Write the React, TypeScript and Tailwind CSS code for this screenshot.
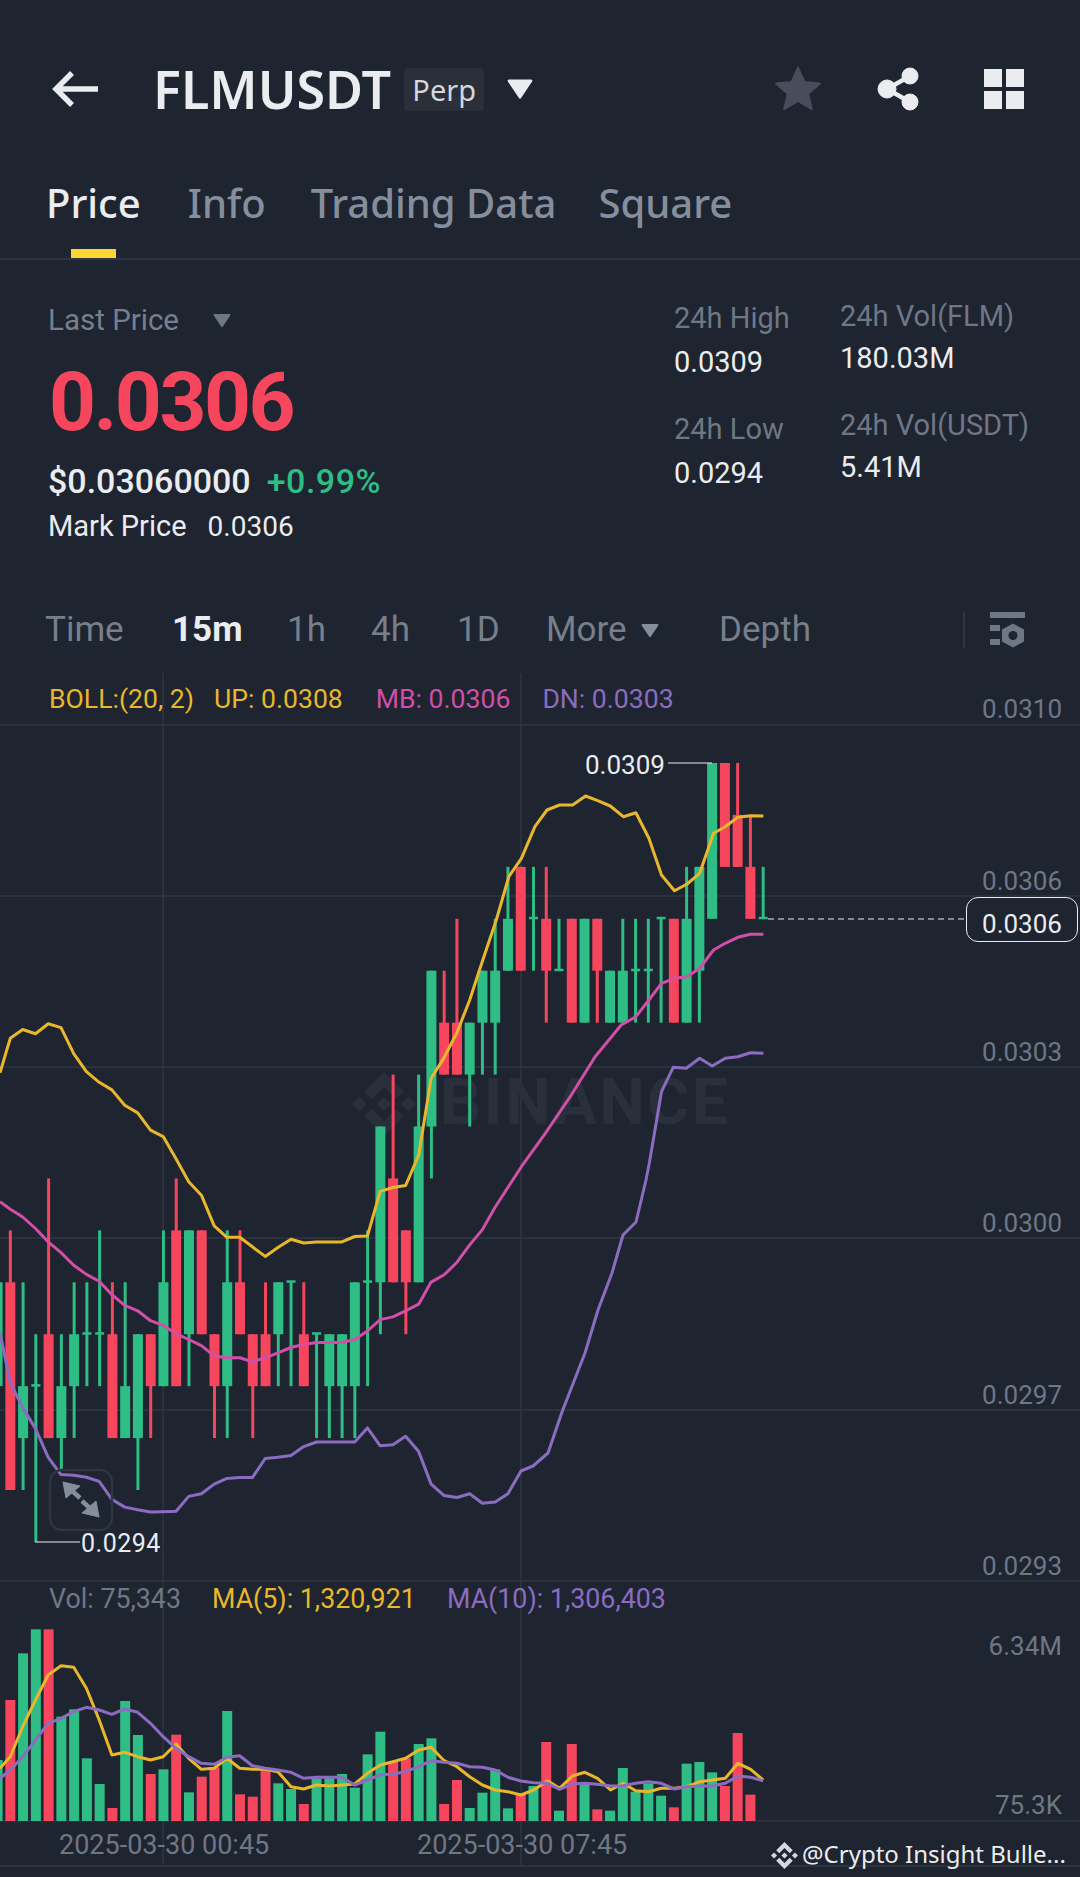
const G = "#2ebd85";
const R = "#f6465d";
const YL = "#e8b72c";
const P = "#d14fa8";
const V = "#8b6cc0";

type C = [string, number, number, number, number];
const candles: C[] = [
  [G, 299, 297, 299, 297],
  [R, 299, 295, 300, 295],
  [G, 297, 296, 299, 295],
  [G, 297, 297, 298, 294],
  [R, 298, 296, 301, 296],
  [G, 297, 296, 298, 295.4],
  [G, 298, 297, 299, 296],
  [G, 298, 298, 299, 297],
  [G, 298, 298, 300, 297],
  [R, 298, 296, 299, 296],
  [G, 297, 296, 299, 296],
  [G, 298, 296, 298, 295],
  [R, 298, 297, 298, 296],
  [G, 299, 297, 300, 297],
  [R, 300, 297, 301, 297],
  [G, 300, 298, 300, 297],
  [R, 300, 298, 300, 298],
  [R, 298, 297, 298, 296],
  [G, 299, 297, 300, 296],
  [R, 299, 298, 300, 298],
  [R, 298, 297, 298, 296],
  [R, 298, 297, 299, 297],
  [G, 299, 298, 299, 297],
  [G, 299, 299, 299, 297],
  [R, 298, 297, 299, 297],
  [G, 298, 298, 298, 296],
  [G, 298, 297, 298, 296],
  [G, 298, 297, 298, 296],
  [G, 299, 297, 299, 296],
  [G, 299, 299, 300, 297],
  [G, 302, 299, 302, 298],
  [R, 301, 299, 303, 299],
  [R, 300, 299, 300, 298],
  [G, 302, 299, 303, 299],
  [G, 305, 302, 305, 301],
  [R, 304, 303, 305, 303],
  [R, 304, 303, 306, 303],
  [G, 304, 303, 304, 302],
  [G, 305, 304, 305, 303],
  [G, 305, 304, 306, 303],
  [G, 306, 305, 307, 305],
  [R, 307, 305, 307, 305],
  [G, 306, 306, 307, 305],
  [R, 306, 305, 307, 304],
  [G, 305, 305, 306, 305],
  [R, 306, 304, 306, 304],
  [G, 306, 304, 306, 304],
  [R, 306, 305, 306, 304],
  [G, 305, 304, 305, 304],
  [G, 305, 304, 306, 304],
  [G, 305, 305, 306, 304],
  [G, 305, 305, 306, 304],
  [G, 306, 306, 306, 304],
  [R, 306, 304, 306, 304],
  [G, 306, 304, 307, 304],
  [G, 307, 305, 307, 304],
  [G, 309, 306, 309, 306],
  [R, 309, 307, 309, 307],
  [R, 308, 307, 309, 307],
  [R, 307, 306, 308, 306],
  [G, 306, 306, 307, 306],
];

const vol: [string, number][] = [
  [G, 570], [R, 390], [G, 250], [G, 178], [R, 178], [G, 440], [G, 418], [G, 565], [G, 642], [R, 714],
  [G, 393], [G, 495], [R, 612], [G, 598], [R, 494], [G, 667], [R, 620], [R, 592], [G, 423], [R, 673],
  [R, 680], [R, 600], [G, 640], [G, 657], [R, 702], [G, 625], [G, 620], [G, 612], [G, 653], [G, 553],
  [G, 485], [R, 575], [R, 565], [G, 522], [G, 505], [R, 702], [R, 630], [G, 714], [G, 668], [G, 598],
  [G, 715], [R, 672], [G, 648], [R, 516], [G, 722], [R, 522], [G, 640], [R, 718], [G, 722], [G, 594],
  [G, 665], [G, 640], [G, 677], [R, 712], [G, 581], [G, 576], [G, 607], [R, 648], [R, 489], [R, 674],
];

const z3 = (a: number[]) => { const o: string[] = []; for (let i = 0; i < a.length; i += 2) o.push(`${(a[i] / 2.904).toFixed(1)},${(1000 + a[i + 1] / 2.613).toFixed(1)}`); return o; };
const z4 = (a: number[]) => { const o: string[] = []; for (let i = 0; i < a.length; i += 2) o.push(`${(400 + a[i] / 2.306).toFixed(1)},${(730 + a[i + 1] / 3).toFixed(1)}`); return o; };
const z5 = (a: number[]) => { const o: string[] = []; for (let i = 0; i < a.length; i += 2) o.push(`${(a[i] / 2.904).toFixed(1)},${(1570 + a[i + 1] / 3).toFixed(1)}`); return o; };
const z6 = (a: number[]) => { const o: string[] = []; for (let i = 0; i < a.length; i += 2) o.push(`${(540 + a[i] / 2.904).toFixed(1)},${(1570 + a[i + 1] / 3).toFixed(1)}`); return o; };

const upper = [
  ...z3([0,190,30,100,66,77,103,88,140,62,177,72,214,140,251,187,288,215,325,235,362,275,400,295,437,340,474,357,511,415,548,475,585,510,622,590,659,620,696,620,733,645,770,670,807,647,845,625,882,635,919,632,956,632,993,632,1030,618,1067,617]),
  ...z3([1104,500,1141,490,1178,485,1216,405,1252,205,1290,150,1327,85,1364,0]),
  ...z4([191,690,222,570,251,440,280,385,311,290,339,240,368,225,398,225,428,198,456,212,485,228,515,260,544,248,574,325,603,435,633,482,662,462,691,430,723,310,750,290,779,262,808,257,838,258]),
].join(" ");
const mid = [
  ...z3([0,527,30,547,66,567,103,597,140,632,177,660,214,693,251,717,288,735,325,770,362,798,400,812,437,838,474,850,511,872,548,887,585,903,622,930,659,935,696,935,733,945,770,935,807,922,845,908,882,900,919,895,956,895,993,895,1030,887,1067,865,1104,835,1141,828,1178,812,1216,795,1252,737,1290,718,1327,685,1364,640,1401,600]),
  ...z4([220,1430,280,1310,335,1210,395,1095,450,980,510,885,544,860,574,810,603,760,633,745,662,740,691,715,723,660,750,640,779,622,808,613,838,613]),
].join(" ");
const lower = [
  ...z3([0,870,30,1000,66,1065,103,1120,140,1195,177,1240,214,1242,251,1247,288,1258,325,1305,362,1325,400,1332,437,1338,474,1337,511,1336,548,1297,585,1290,622,1265,659,1250,696,1248,733,1248,770,1198,807,1195,845,1190,882,1167,919,1155,956,1155,993,1155,1030,1155,1067,1118,1104,1165,1141,1162,1178,1140,1216,1180,1252,1265,1290,1295,1327,1300,1364,1290,1401,1315,1438,1312,1475,1290]),
  "521,1471","533,1466","548,1453","562,1412","585,1353","598,1310","612,1273","623,1235","636,1222","646,1180",
  ...z4([575,1300,603,1085,630,1012,660,1015,691,985,720,1008,750,985,779,980,808,968,838,970]),
].join(" ");
const volY = [
  ...z5([0,595,30,560,66,470,103,390,140,315,177,287,214,292,251,355,288,450,325,555,362,547,400,560,437,570,474,560,511,522,548,565,585,598,622,595,659,565,696,595,733,598,770,598,807,605,845,650,882,657,919,645,956,648,993,645,1030,642,1067,610,1104,585,1141,575,1178,565,1216,540,1252,532,1290,572,1327,590,1364,620,1401,645,1438,660,1475,665,1513,675,1550,660]),
  ...z6([22,632,57,655,94,618,130,607,167,625,205,660,241,640,278,662,315,665,352,655,390,655,427,650,464,635,501,630,538,625,575,580,612,598,648,630]),
].join(" ");
const volV = [
  ...z5([0,625,30,600,66,560,103,510,140,460,177,445,214,425,251,412,288,420,325,433,362,417,400,427,437,460,474,500,511,535,548,560,585,580,622,583,659,562,696,557,733,587,770,595,807,600,845,607,882,625,919,622,956,622,993,622,1030,645,1067,630,1104,615,1141,612,1178,605,1216,590,1252,572,1290,577,1327,580,1364,590,1401,592,1438,600,1475,622,1513,633,1550,638]),
  ...z6([22,640,57,658,94,642,130,640,167,643,205,648,241,647,278,640,315,635,352,640,390,657,427,650,464,648,501,648,538,640,575,618,612,622,648,632]),
].join(" ");

const py = (p: number) => 763 + (309 - p) * 51.93;
const cx = (i: number) => 10.33 + 12.76 * (i - 1);
const LOGO = "M16.624 13.9202l2.7175 2.7154-7.353 7.353-7.353-7.352 2.7175-2.7164 4.6355 4.6595 4.6356-4.6595zm4.6366-4.6366L24 12l-2.7154 2.7164L18.5682 12l2.6924-2.7164zm-9.272.001l2.7163 2.6914-2.7164 2.7174v-.001L9.2721 12l2.7164-2.7154zm-9.2722-.001L5.4088 12l-2.6914 2.6924L0 12l2.7164-2.7164zM11.9885.0115l7.353 7.329-2.7174 2.7154-4.6356-4.6356-4.6355 4.6595-2.7174-2.7154 7.353-7.353z";

function Tri({ w, h, color }: { w: number; h: number; color: string }) {
  return (
    <svg width={w} height={h} viewBox="0 0 20 16">
      <path d="M2 1h16a1 1 0 0 1 .8 1.600l-8 12a1 1 0 0 1-1.600 0l-8-12A1 1 0 0 1 2 1z" fill={color} />
    </svg>
  );
}

function Chart() {
  return (
    <svg className="absolute inset-0" width={1080} height={1204} viewBox="0 673 1080 1204">
      {[725, 896, 1067, 1238, 1410, 1581, 1821, 1866].map((y) => (
        <line key={y} x1={0} x2={1080} y1={y} y2={y} stroke="#2f3540" strokeWidth={1.5} />
      ))}
      <line x1={163} x2={163} y1={673} y2={1866} stroke="#2f3540" strokeWidth={1.5} />
      <line x1={521} x2={521} y1={673} y2={1866} stroke="#2f3540" strokeWidth={1.5} />

      <g fill="#2a303b">
        <svg x={352} y={1072} width={64} height={64} viewBox="0 0 24 24"><path d={LOGO} /></svg>
        <text x={440} y={1124} fontFamily="Roboto, sans-serif" fontWeight={700} fontSize={64} textLength={288}>BINANCE</text>
      </g>

      {candles.map(([c, t, b, wt, wb], i) => {
        const x = cx(i);
        const doji = t === b;
        return (
          <g key={i} fill={c}>
            <rect x={x - 1.5} width={3} y={py(wt)} height={py(wb) - py(wt)} />
            {doji ? (
              <rect x={x - 4.5} width={9} y={py(t) - 2} height={2.5} />
            ) : (
              <rect x={x - 5} width={10} y={py(t)} height={py(b) - py(t)} />
            )}
          </g>
        );
      })}
      {vol.map(([c, t], i) => (
        <rect key={i} x={cx(i) - 5} width={10} y={1570 + t / 3} height={1821 - (1570 + t / 3)} fill={c} />
      ))}

      <g fill="none" strokeWidth={3} strokeLinejoin="round">
        <polyline points={upper} stroke={YL} />
        <polyline points={mid} stroke={P} />
        <polyline points={lower} stroke={V} />
        <polyline points={volY} stroke={YL} />
        <polyline points={volV} stroke={V} />
      </g>

      <line x1={668} x2={712} y1={763} y2={763} stroke="#eaecef" strokeWidth={1.2} />
      <line x1={35} x2={80} y1={1542} y2={1542} stroke="#eaecef" strokeWidth={1.2} />
      <line x1={768} x2={966} y1={919} y2={919} stroke="#eaecef" strokeWidth={1.2} strokeDasharray="6 4" />

      <rect x={50} y={1470} width={62} height={60} rx={12} fill="none" stroke="#2f3540" strokeWidth={2.5} />
      <g fill="#848e9c" stroke="#848e9c">
        <path d="M63 1482 80 1486 66 1498z" strokeWidth={1} />
        <path d="M70 1489 80 1498" strokeWidth={4.5} />
        <path d="M99 1517 82 1513 96 1501z" strokeWidth={1} />
        <path d="M92 1510 82 1501" strokeWidth={4.5} />
      </g>

      <svg x={771} y={1842} width={27} height={27} viewBox="0 0 24 24"><path d={LOGO} fill="#d5d7db" /></svg>
    </svg>
  );
}

const din = "font-['Roboto',sans-serif]";
const plex = "font-['Noto_Sans',sans-serif]";

function AxisLabel({ y, children }: { y: string; children: string }) {
  return <div className={`absolute right-[18px] text-[26px] leading-[30px] text-[#6f7785] ${din} ${y}`}>{children}</div>;
}

export default function App() {
  return (
    <div className={`w-[1080px] h-[1877px] overflow-hidden bg-[#1e2430] ${din}`}>
      <div className="h-[178px] flex items-center relative">
        <svg className="ml-[52px]" width={47} height={38} viewBox="0 0 47 38">
          <path d="M20 3 4 19l16 16M5 19h41" fill="none" stroke="#eaecef" strokeWidth={5.5} />
        </svg>
        <div className={`ml-[54px] text-[52px] leading-[60px] font-semibold text-[#eaecef] ${plex}`}>FLMUSDT</div>
        <div className={`ml-[13px] h-[43px] w-[80px] pt-[2px] rounded-[4px] bg-[#2a2f3a] flex items-center justify-center text-[29px] text-[#d5d7db] ${plex}`}>Perp</div>
        <div className="ml-[22px] flex"><Tri w={28} h={22} color="#eaecef" /></div>
        <div className="ml-auto mr-[55px] flex items-center">
          <svg width={48} height={46} viewBox="0 0 24 23">
            <path d="M12 .8 15.200 8l7.800.7-5.900 5.200 1.800 7.700L12 17.500l-6.900 4.100 1.800-7.700L1 8.700 8.800 8z" fill="#474d5b" stroke="#474d5b" strokeLinejoin="round" />
          </svg>
          <svg className="ml-[55px]" width={44} height={46} viewBox="0 0 44 46">
            <g fill="#eaecef" stroke="#eaecef">
              <circle cx={33} cy={10} r={8} />
              <circle cx={10} cy={23} r={9} />
              <circle cx={33} cy={36} r={8} />
              <path d="M33 10 10 23l23 13" fill="none" strokeWidth={4.5} />
            </g>
          </svg>
          <svg className="ml-[63px]" width={41} height={41} viewBox="0 0 41 41" fill="#eaecef">
            <rect x={0} y={0} width={18} height={18} />
            <rect x={22} y={0} width={18} height={18} />
            <rect x={0} y={22} width={18} height={18} />
            <rect x={22} y={22} width={18} height={18} />
          </svg>
        </div>
      </div>

      <div className={`relative h-[82px] border-b-2 border-[#2f3540] flex items-start pl-[46px] text-[40px] leading-[50px] font-medium text-[#848e9c] ${plex}`}>
        <div className="text-[#eaecef]">Price</div>
        <div className="ml-[47px]">Info</div>
        <div className="ml-[45px]">Trading Data</div>
        <div className="ml-[42px]">Square</div>
        <div className="absolute left-[71px] bottom-0 w-[45px] h-[9px] bg-[#fcd535]" />
      </div>

      <div className="h-[340px] flex">
        <div className="w-[674px] pl-[48px] pt-[42px]">
          <div className="flex items-center h-[36px] text-[29.500px] text-[#777f8c]">
            <span className="w-[164px]">Last Price</span>
            <Tri w={20} h={15} color="#6f7785" />
          </div>
          <div className="mt-[26px] h-[76px] leading-[76px] text-[82px] tracking-[-2.500px] font-bold text-[#f6465d] pl-[1px]">0.0306</div>
          <div className="mt-[21px] h-[40px] flex items-center gap-[16px] text-[34px] font-medium">
            <span className="text-[#eaecef]">$0.03060000</span>
            <span className="text-[#2ebd85] tracking-[0.5px]">+0.99%</span>
          </div>
          <div className="mt-[8px] h-[36px] flex items-center gap-[21px] text-[28px] text-[#eaecef]">
            <span className="text-[29px]">Mark Price</span>
            <span>0.0306</span>
          </div>
        </div>
        <div className="w-[166px] pt-[40px] text-[29px] leading-[36px]">
          <div className="text-[#6f7785]">24h High</div>
          <div className="mt-[8px] text-[#eaecef]">0.0309</div>
          <div className="mt-[31px] text-[#6f7785]">24h Low</div>
          <div className="mt-[8px] text-[#eaecef]">0.0294</div>
        </div>
        <div className="pt-[38px] text-[29px] leading-[36px]">
          <div className="text-[#6f7785]">24h Vol(FLM)</div>
          <div className="mt-[6px] text-[#eaecef]">180.03M</div>
          <div className="mt-[31px] text-[#6f7785]">24h Vol(USDT)</div>
          <div className="mt-[6px] text-[#eaecef]">5.41M</div>
        </div>
      </div>

      <div className="h-[73px] pb-[13px] flex items-center pl-[45px] text-[35px] text-[#777f8c] relative">
        <span className="w-[127px]">Time</span>
        <span className="w-[115px] font-bold text-[#eaecef]">15m</span>
        <span className="w-[84px]">1h</span>
        <span className="w-[86px]">4h</span>
        <span className="w-[89px]">1D</span>
        <span className="w-[94px]">More</span>
        <Tri w={20} h={15} color="#848e9c" />
        <span className="ml-[59px]">Depth</span>
        <div className="ml-auto mr-[54px] flex items-center gap-[25px]">
          <div className="w-[2px] h-[36px] bg-[#2f3540]" />
          <svg width={36} height={36} viewBox="0 0 36 36" fill="#6f7785">
            <rect x={0} y={0} width={35} height={6} />
            <rect x={0} y={13} width={10} height={6} />
            <rect x={0} y={27} width={10} height={6} />
            <path d="M23 11.500 34 17.500v12l-11 6-11-6v-12z" />
            <circle cx={23} cy={23.5} r={4.5} fill="#1e2430" />
          </svg>
        </div>
      </div>

      <div className="relative h-[1204px]">
        <Chart />
        <div className="absolute left-[49px] top-[11px] flex text-[26.600px] leading-[30px]">
          <span className="text-[#e8b72c]">BOLL:(20, 2)</span>
          <span className="text-[#e8b72c] ml-[20px]">UP: 0.0308</span>
          <span className="text-[#d14fa8] ml-[33px]">MB: 0.0306</span>
          <span className="text-[#8b6cc0] ml-[32px]">DN: 0.0303</span>
        </div>
        <AxisLabel y="top-[21px]">0.0310</AxisLabel>
        <AxisLabel y="top-[193px]">0.0306</AxisLabel>
        <AxisLabel y="top-[364px]">0.0303</AxisLabel>
        <AxisLabel y="top-[535px]">0.0300</AxisLabel>
        <AxisLabel y="top-[707px]">0.0297</AxisLabel>
        <AxisLabel y="top-[878px]">0.0293</AxisLabel>
        <div className="absolute left-[966px] top-[224px] w-[112px] h-[45px] rounded-[12px] border border-[#eaecef] bg-[#1e2430] flex items-center justify-center pt-[9px] text-[26px] text-[#eaecef]">0.0306</div>
        <div className="absolute left-[585px] top-[77px] text-[26px] leading-[30px] text-[#eaecef]">0.0309</div>
        <div className="absolute left-[81px] top-[856px] text-[25px] leading-[30px] tracking-[0.5px] text-[#eaecef]">0.0294</div>

        <div className="absolute left-[49px] top-[911px] text-[26.800px] leading-[30px] text-[#6f7785]">Vol: 75,343</div>
        <div className="absolute left-[212px] top-[911px] text-[26.800px] leading-[30px] text-[#e8b72c]">MA(5): 1,320,921</div>
        <div className="absolute left-[447px] top-[911px] text-[26.800px] leading-[30px] text-[#8b6cc0]">MA(10): 1,306,403</div>
        <AxisLabel y="top-[958px]">6.34M</AxisLabel>
        <AxisLabel y="top-[1117px]">75.3K</AxisLabel>
        <div className="absolute left-[59px] top-[1157px] text-[27px] leading-[30px] text-[#6f7785]">2025-03-30 00:45</div>
        <div className="absolute left-[417px] top-[1157px] text-[27px] leading-[30px] text-[#6f7785]">2025-03-30 07:45</div>
        <div className={`absolute left-[802px] top-[1163px] text-[24px] leading-[36px] text-[#eaecef] whitespace-nowrap ${plex}`}>@Crypto Insight Bulle...</div>
      </div>
    </div>
  );
}
